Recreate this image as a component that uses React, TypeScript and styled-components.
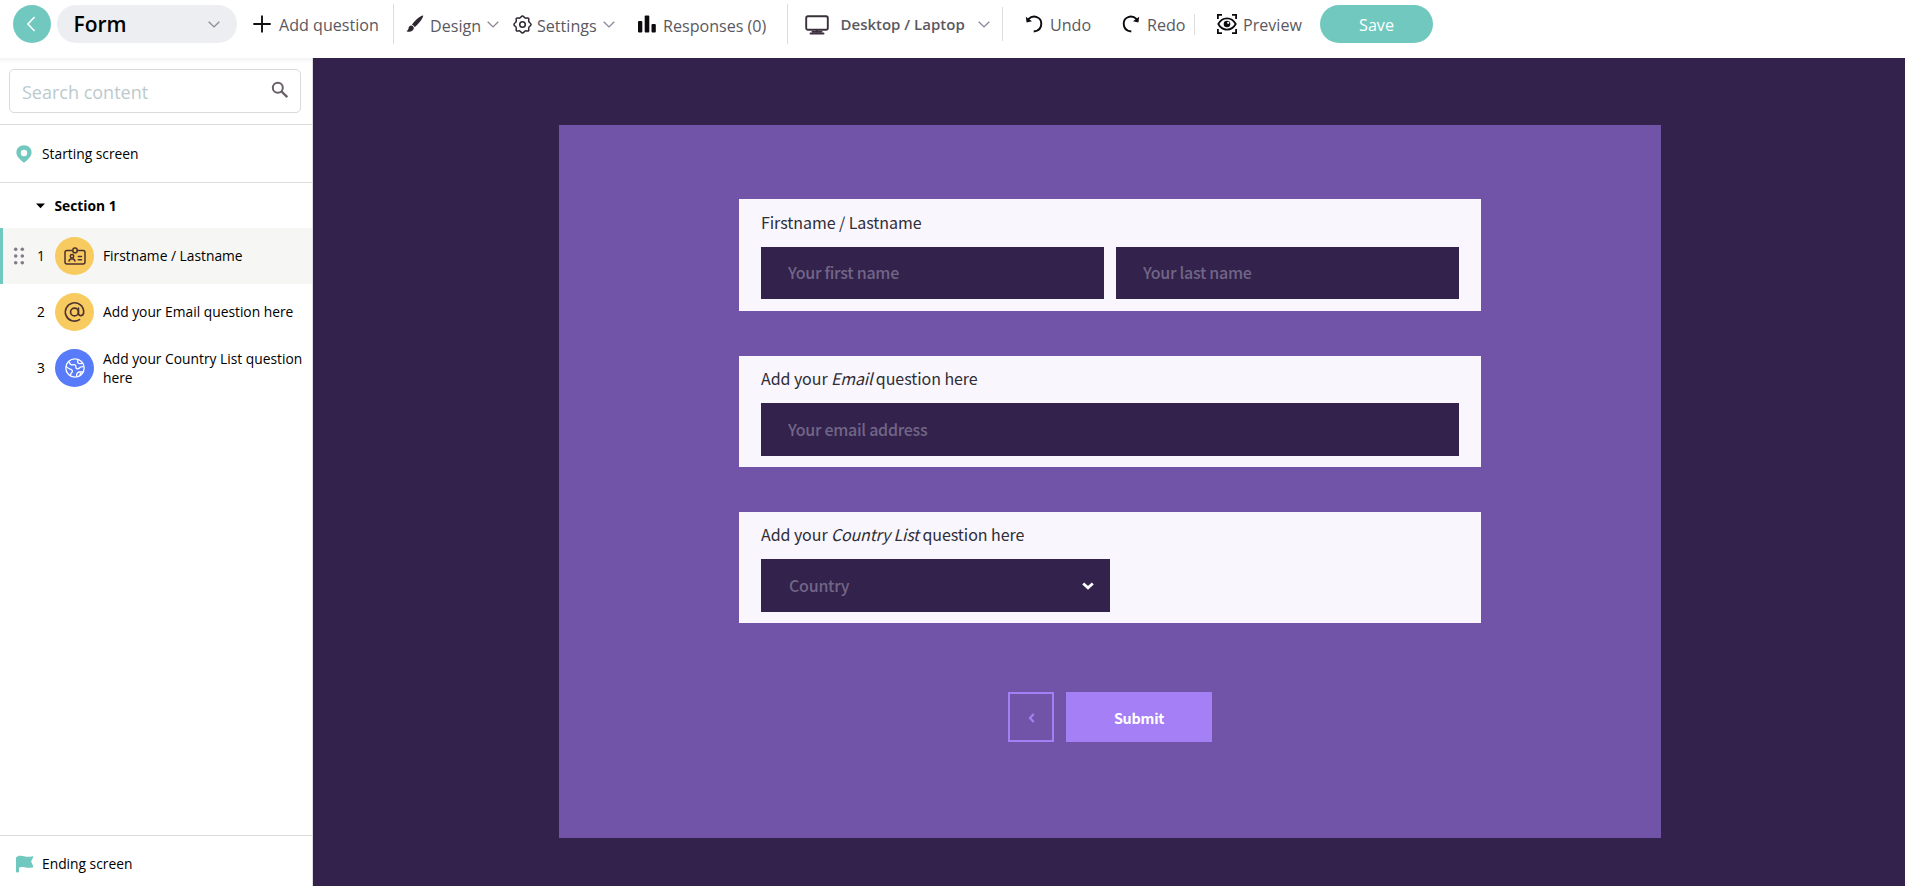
import React from "react";
import styled, { createGlobalStyle } from "styled-components";

const TEAL = "#70c8bf";
const NAVY = "#33224c";
const LILAC = "#a57ff6";

const uiFont = `"Open Sans", "Noto Sans", sans-serif`;
const formFont = `"Noto Sans CJK SC", "Noto Sans", sans-serif`;

const GlobalStyle = createGlobalStyle`
  *, *::before, *::after { box-sizing: border-box; }
  body { margin: 0; font-family: ${uiFont}; background: #fff; }
  button, input { font: inherit; border: 0; margin: 0; padding: 0; background: none; }
  button { cursor: pointer; }
  svg { display: block; flex: none; }
`;

const Page = styled.div`
  display: flex;
  flex-direction: column;
  height: 100vh;
  min-height: 886px;
  overflow: hidden;
`;

/* ---------- Header ---------- */

const Header = styled.header`
  display: flex;
  align-items: center;
  height: 58px;
  padding: 0 0 10px 13px;
  flex: none;
  background: #fff;
  color: #5a5861;
  font-size: 16.1px;
  line-height: 24px;
  white-space: nowrap;
`;

const BackButton = styled.button`
  display: flex;
  align-items: center;
  justify-content: center;
  width: 38px;
  height: 38px;
  margin-right: 6px;
  border-radius: 50%;
  background: ${TEAL};
`;

const FormPicker = styled.button`
  display: flex;
  align-items: center;
  justify-content: space-between;
  width: 180px;
  height: 38px;
  padding: 0 17px 0 16.5px;
  margin-right: 16px;
  border-radius: 19px;
  background: #edeef1;
  color: #000;
  font-size: 21px;
  font-weight: 600;
`;

const Tool = styled.button<{ $width: number; $gap: number; $inset?: number }>`
  display: flex;
  align-items: center;
  flex: none;
  width: ${(p) => p.$width}px;
  padding-left: ${(p) => p.$inset ?? 0}px;
  gap: ${(p) => p.$gap}px;
  color: inherit;
`;

const ToolLabel = styled.span<{ $drop?: number; $width: number; $strong?: boolean }>`
  flex: none;
  width: ${(p) => p.$width}px;
  text-align: left;
  padding-top: ${(p) => p.$drop ?? 2}px;
  font-size: ${(p) => (p.$strong ? "15px" : "inherit")};
  font-weight: ${(p) => (p.$strong ? 600 : 400)};
`;

const Divider = styled.span<{ $height: number }>`
  flex: none;
  width: 1px;
  height: ${(p) => p.$height}px;
  background: #dcdcdf;
`;

const SaveButton = styled.button`
  width: 113px;
  height: 38px;
  padding-top: 2px;
  border-radius: 19px;
  background: ${TEAL};
  color: #fff;
`;

/* ---------- Sidebar ---------- */

const Body = styled.div`
  display: flex;
  flex: 1;
  min-height: 0;
`;

const Sidebar = styled.aside`
  display: flex;
  flex-direction: column;
  flex: none;
  width: 313px;
  border-right: 1px solid #dcdcdf;
  background: linear-gradient(#f3f3f5, #fff 5px);
  color: #000;
  font-size: 13.8px;
  line-height: 19px;
`;

const SearchArea = styled.div`
  height: 67px;
  padding: 11px 11px 0 9px;
  border-bottom: 1px solid #dcdcdf;
`;

const SearchBox = styled.label`
  display: flex;
  align-items: center;
  height: 44px;
  padding: 0 11px 0 12px;
  border: 1px solid #d9dadd;
  border-radius: 5px;
  background: #fff;
`;

const SearchInput = styled.input`
  flex: 1;
  min-width: 0;
  height: 40px;
  padding-top: 2px;
  outline: 0;
  font-size: 18px;
  &::placeholder { color: #bccacd; opacity: 1; }
`;

const SearchGlyph = styled.span`
  padding-bottom: 3px;
`;

const ScreenRow = styled.div<{ $end?: boolean }>`
  display: flex;
  align-items: center;
  gap: ${(p) => (p.$end ? 8 : 10)}px;
  height: ${(p) => (p.$end ? "51px" : "58px")};
  padding: ${(p) => (p.$end ? "5px 0 0 16px" : "0 0 0 16px")};
  margin-top: ${(p) => (p.$end ? "auto" : "0")};
  border: 0 solid #dcdcdf;
  border-width: ${(p) => (p.$end ? "1px 0 0" : "0 0 1px")};
`;

const SectionTitle = styled.div`
  display: flex;
  align-items: center;
  gap: 9.5px;
  height: 45px;
  padding-left: 36px;
  font-weight: 700;
`;

const QuestionRow = styled.div<{ $active?: boolean }>`
  display: flex;
  align-items: center;
  height: 56px;
  padding: 0 0 1px 10px;
  border-left: 3px solid ${(p) => (p.$active ? TEAL : "transparent")};
  background: ${(p) => (p.$active ? "#f6f6f4" : "transparent")};
`;

const DragSlot = styled.span`
  display: flex;
  width: 24px;
`;

const QuestionNumber = styled.span`
  width: 18px;
`;

const Badge = styled.span<{ $color: string }>`
  display: flex;
  align-items: center;
  justify-content: center;
  flex: none;
  width: 39px;
  height: 38px;
  margin-right: 9px;
  border-radius: 50%;
  background: ${(p) => p.$color};
`;

const QuestionName = styled.span`
  flex: 1;
`;

/* ---------- Form preview ---------- */

const Stage = styled.main`
  flex: 1;
  padding: 67px 0 0 246px;
  background: ${NAVY};
  font-family: ${formFont};
`;

const FormPanel = styled.form`
  display: flex;
  flex-direction: column;
  align-items: center;
  gap: 45px;
  width: 1102px;
  height: 713px;
  padding-top: 74px;
  background: #7154a7;
`;

const Card = styled.section<{ $first?: boolean }>`
  width: 742px;
  height: ${(p) => (p.$first ? 112 : 111)}px;
  padding: ${(p) => (p.$first ? 11 : 10)}px 22px 0;
  background: #f9f6fe;
`;

const Question = styled.div`
  height: 37px;
  color: #2f2d35;
  font-size: 16px;
  letter-spacing: -0.06px;
  line-height: 24px;
  white-space: pre;

  em {
    letter-spacing: -0.2px;
  }
`;

const FieldRow = styled.div`
  display: flex;
  gap: 12px;
`;

const TextField = styled.input<{ $tall?: boolean }>`
  flex: 1;
  min-width: 0;
  height: ${(p) => (p.$tall ? 53 : 52)}px;
  padding: 0 27px 2px;
  outline: 0;
  background: ${NAVY};
  color: #fff;
  font-size: 16px;
  font-weight: 500;
  letter-spacing: -0.28px;
  &::placeholder { color: #716687; opacity: 1; }
`;

const SelectField = styled.div`
  display: flex;
  align-items: center;
  justify-content: space-between;
  width: 349px;
  height: 53px;
  padding: 0 16px 1px 28px;
  background: ${NAVY};
  color: #716687;
  font-size: 16px;
  line-height: 22px;
  font-weight: 500;
  letter-spacing: -0.24px;
`;

const Actions = styled.div`
  display: flex;
  gap: 12px;
  margin-top: 24px;
`;

const PreviousButton = styled.button`
  display: flex;
  align-items: center;
  justify-content: center;
  width: 46px;
  height: 50px;
  padding-top: 2px;
  border: 2px solid ${LILAC};
`;

const SubmitButton = styled.button`
  width: 146px;
  height: 50px;
  padding-top: 1px;
  background: ${LILAC};
  color: #fff;
  font-size: 14.4px;
  font-weight: 700;
  letter-spacing: -0.25px;
`;

/* ---------- Icons ---------- */

const Chevron = () => (
  <svg width="12" height="7" viewBox="0 0 12 7" fill="none" stroke="#8f8798" strokeWidth="1.4">
    <path d="M.7.8 6 5.9 11.3.8" />
  </svg>
);

const BackIcon = () => (
  <svg width="10" height="16" viewBox="0 0 10 16" fill="none" stroke="#fff" strokeWidth="1.5">
    <path d="M7.6 1 .9 8l6.7 7" />
  </svg>
);

const PlusIcon = () => (
  <svg width="18" height="18" viewBox="0 0 18 18" stroke="#111" strokeWidth="1.9">
    <path d="M9 .5v17M.3 9h17.4" />
  </svg>
);

const BrushIcon = () => (
  <svg width="18" height="18" viewBox="0 0 18 18" fill="#2c2631">
    <path d="M17 .6C14.200.9 8.200 6.100 6 9.700c1.300.4 2.200 1.300 2.700 2.500C12 9.500 16.500 4 17.200 1c.1-.3 0-.4-.2-.4Z" />
    <path d="M5.300 10.600c-1.400-.1-2.400.9-2.700 2.300-.2 1.300-.7 2.400-2.100 3.300 2.600 1.300 6.700.8 7.400-3.100-.5-1.400-1.300-2.200-2.600-2.500Z" />
  </svg>
);

const GearIcon = () => (
  <svg width="19" height="19" viewBox="0 0 20 20" fill="none" stroke="#2c2631" strokeWidth="1.6" strokeLinejoin="round">
    <path d="M10 1c1.300 0 1.700 1.800 2.900 2.200 1.200.5 2.600-.7 3.500.2.900.9-.3 2.300.2 3.500.4 1.200 2.400 1.600 2.400 3.100s-2 1.900-2.400 3.100c-.5 1.200.7 2.600-.2 3.500-.9.9-2.300-.3-3.500.2C11.700 17.200 11.300 19 10 19s-1.700-1.800-2.900-2.200c-1.200-.5-2.600.7-3.500-.2-.9-.9.3-2.300-.2-3.500C3 11.900 1 11.500 1 10s2-1.900 2.400-3.100c.5-1.200-.7-2.600.2-3.500.9-.9 2.300.3 3.500-.2C8.300 2.800 8.700 1 10 1Z" />
    <circle cx="10" cy="10" r="2.900" />
  </svg>
);

const BarsIcon = () => (
  <svg width="18" height="18" viewBox="0 0 18 18" fill="#0c0a0e">
    <rect x="0" y="6" width="4.300" height="11.500" rx="1" />
    <rect x="6.700" y="0.500" width="4.600" height="17" rx="1" />
    <rect x="13.500" y="9" width="4.300" height="8.500" rx="1" />
  </svg>
);

const MonitorIcon = () => (
  <svg width="24" height="22" viewBox="0 0 24 22" fill="none" stroke="#3a313d" strokeWidth="1.9" strokeLinecap="round">
    <rect x="1.200" y="3.200" width="21.600" height="13.600" rx="1.800" />
    <path d="M12 17v2M7.500 18.700h9" />
    <path d="M5.500 20.500h13" />
  </svg>
);

const TurnIcon = ({ flip = false }: { flip?: boolean }) => (
  <svg width="18" height="18" viewBox="0 0 18 18" fill="none">
    <g transform={flip ? "translate(18 0) scale(-1 1)" : undefined}>
      <path d="M3.300 4.200C8.500-.8 16.300 2 16.300 8.700c0 4.600-3.300 7.300-7.600 7.800" stroke="#0c0a0e" strokeWidth="1.900" />
      <path d="M.8 1.800 1.600 7.600 7 6.200Z" fill="#0c0a0e" />
    </g>
  </svg>
);

const PreviewIcon = () => (
  <svg width="20" height="20" viewBox="0 0 20 20" fill="none" stroke="#0c0a0e" strokeWidth="1.800">
    <path d="M.9 5V.9H5M15 .9h4.100V5M19.100 15v4.100H15M5 19.100H.9V15" />
    <path d="M1.300 10C5.300 2.500 14.700 2.500 18.700 10 14.700 17.500 5.300 17.500 1.300 10Z" />
    <circle cx="10" cy="10" r="3.300" fill="#0c0a0e" stroke="none" />
    <circle cx="11.200" cy="8.800" r="1.100" fill="#fff" stroke="none" />
  </svg>
);

const SearchIcon = () => (
  <svg width="18" height="18" viewBox="0 0 18 18" fill="none" stroke="#6a5e68" strokeWidth="2">
    <circle cx="6.800" cy="6.800" r="5" />
    <path d="m10.500 10.500 5.800 5.700" strokeWidth="2.400" />
  </svg>
);

const PinIcon = () => (
  <svg width="16" height="18" viewBox="0 0 16 18" fill={TEAL} fillRule="evenodd">
    <path d="M8 .3C3.700.3.400 3.400.400 7.500c0 3.800 2.900 6 6.100 9.300.9.900 2.100.9 3 0 3.200-3.300 6.100-5.500 6.100-9.300C15.600 3.400 12.300.3 8 .3Zm0 4.500a3.200 3.200 0 1 1 0 6.400 3.200 3.200 0 0 1 0-6.400Z" />
  </svg>
);

const FlagIcon = () => (
  <svg width="18" height="18" viewBox="0 0 18 18" fill={TEAL}>
    <path d="M0 2.500C1.800.3 5.300.400 8 1.200c3 .8 6 .6 8.800 0 .6 0 .7.500.4 1l-2.100 4.300 2.100 4.800c.3.700 0 1.200-.7 1.300-3.500.500-5.500.2-8-.4-2-.4-4-.3-5.500.4v3.800c0 1.500-3 1.500-3 0Z" />
  </svg>
);

const CaretIcon = () => (
  <svg width="9" height="6" viewBox="0 0 9 6" fill="#000">
    <path d="M0 .5h9L4.500 5.200Z" />
  </svg>
);

const DragIcon = () => (
  <svg width="12" height="18" viewBox="0 0 12 18" fill="#837c86">
    {[2.3, 9, 15.7].map((y) => (
      <React.Fragment key={y}>
        <circle cx="2.700" cy={y} r="1.800" />
        <circle cx="9.300" cy={y} r="1.800" />
      </React.Fragment>
    ))}
  </svg>
);

const IdCardIcon = () => (
  <svg width="22" height="20" viewBox="0 0 22 20" fill="none" stroke="#4f3230" strokeWidth="1.500" strokeLinecap="round">
    <path d="M8.500 4.500H3a2 2 0 0 0-2 2V16a2 2 0 0 0 2 2h16a2 2 0 0 0 2-2V6.500a2 2 0 0 0-2-2h-5.500" />
    <rect x="8.900" y="2" width="4.200" height="4.800" rx="1.800" />
    <circle cx="8" cy="10.300" r="1.700" />
    <path d="M5 15c.4-1.600 1.500-2.200 3-2.200s2.600.6 3 2.200M14.300 10.500h3.200M14.300 13.800h3.200" />
  </svg>
);

const AtIcon = () => (
  <svg width="23" height="22" viewBox="0 0 24 24" fill="none" stroke="#4f3230" strokeWidth="1.800" strokeLinecap="round">
    <circle cx="12" cy="12" r="4.300" />
    <path d="M16.300 7.800v5.400c0 4 5.700 3.800 5.700-1.200a10 10 0 1 0-4.500 8.300" />
  </svg>
);

const GlobeIcon = () => (
  <svg width="20" height="20" viewBox="0 0 60 60" fill="none" stroke="#fff" strokeWidth="4" strokeLinejoin="round">
    <circle cx="30" cy="30" r="27.500" />
    <path d="M12 11c2 6 7 11 14 9 6-1 7 5 7 9s7 5 10 1 6-5 13-4" />
    <path d="M40 5c-5 5-2 11 4 12l8-1" />
    <path d="M3 24c5 8 9 8 15 10 7 3 4 9 0 12l-2 7" />
    <path d="M35 56c-1-9 2-14 10-14l9 0M44 54l3-9" />
  </svg>
);

const SelectArrow = () => (
  <svg width="12" height="10" viewBox="0 0 12 10" fill="none" stroke="#fff" strokeWidth="2.800">
    <path d="M1.200 3.500 6 7.800l4.800-4.300" />
  </svg>
);

const PreviousIcon = () => (
  <svg width="7" height="10" viewBox="0 0 7 10" fill="none" stroke={LILAC} strokeWidth="2.200">
    <path d="M5.700 1 2 5l3.700 4" />
  </svg>
);

const questions = [
  { name: "Firstname / Lastname", color: "#f7cb5f", icon: <IdCardIcon />, active: true },
  { name: "Add your Email question here", color: "#f7cb5f", icon: <AtIcon /> },
  { name: "Add your Country List question here", color: "#577bf9", icon: <GlobeIcon /> },
];

export default function App() {
  return (
    <Page>
      <GlobalStyle />
      <Header>
        <BackButton aria-label="Back"><BackIcon /></BackButton>
        <FormPicker>Form<Chevron /></FormPicker>
        <Tool $width={140} $gap={8}>
          <PlusIcon />
          <ToolLabel $width={102}>Add question</ToolLabel>
        </Tool>
        <Divider $height={40} />
        <Tool $width={119} $gap={6} $inset={12}>
          <BrushIcon />
          <ToolLabel $width={51} $drop={4}>Design</ToolLabel>
          <Chevron />
        </Tool>
        <Tool $width={125} $gap={5}>
          <GearIcon />
          <ToolLabel $width={61} $drop={4}>Settings</ToolLabel>
          <Chevron />
        </Tool>
        <Tool $width={149} $gap={7}>
          <BarsIcon />
          <ToolLabel $width={105} $drop={3}>Responses (0)</ToolLabel>
        </Tool>
        <Divider $height={40} />
        <Tool $width={214} $gap={11.5} $inset={17}>
          <MonitorIcon />
          <ToolLabel $width={126} $drop={0} $strong>Desktop / Laptop</ToolLabel>
          <Chevron />
        </Tool>
        <Divider $height={34} />
        <Tool $width={119} $gap={7} $inset={22}>
          <TurnIcon />
          <ToolLabel $width={44}>Undo</ToolLabel>
        </Tool>
        <Tool $width={72} $gap={7}>
          <TurnIcon flip />
          <ToolLabel $width={40}>Redo</ToolLabel>
        </Tool>
        <Divider $height={21} />
        <Tool $width={125} $gap={6} $inset={22}>
          <PreviewIcon />
          <ToolLabel $width={60}>Preview</ToolLabel>
        </Tool>
        <SaveButton>Save</SaveButton>
      </Header>

      <Body>
        <Sidebar>
          <SearchArea>
            <SearchBox>
              <SearchInput placeholder="Search content" />
              <SearchGlyph><SearchIcon /></SearchGlyph>
            </SearchBox>
          </SearchArea>
          <ScreenRow><PinIcon />Starting screen</ScreenRow>
          <SectionTitle><CaretIcon />Section 1</SectionTitle>
          {questions.map((q, i) => (
            <QuestionRow key={q.name} $active={q.active}>
              <DragSlot>{q.active && <DragIcon />}</DragSlot>
              <QuestionNumber>{i + 1}</QuestionNumber>
              <Badge $color={q.color}>{q.icon}</Badge>
              <QuestionName>{q.name}</QuestionName>
            </QuestionRow>
          ))}
          <ScreenRow $end><FlagIcon />Ending screen</ScreenRow>
        </Sidebar>

        <Stage>
          <FormPanel onSubmit={(e) => e.preventDefault()}>
            <Card $first>
              <Question>Firstname / Lastname</Question>
              <FieldRow>
                <TextField placeholder="Your first name" />
                <TextField placeholder="Your last name" />
              </FieldRow>
            </Card>
            <Card>
              <Question>Add your <em>Email</em> question here</Question>
              <FieldRow>
                <TextField $tall placeholder="Your email address" />
              </FieldRow>
            </Card>
            <Card>
              <Question>Add your <em>Country List</em> question here</Question>
              <SelectField>Country<SelectArrow /></SelectField>
            </Card>
            <Actions>
              <PreviousButton type="button" aria-label="Previous"><PreviousIcon /></PreviousButton>
              <SubmitButton>Submit</SubmitButton>
            </Actions>
          </FormPanel>
        </Stage>
      </Body>
    </Page>
  );
}
